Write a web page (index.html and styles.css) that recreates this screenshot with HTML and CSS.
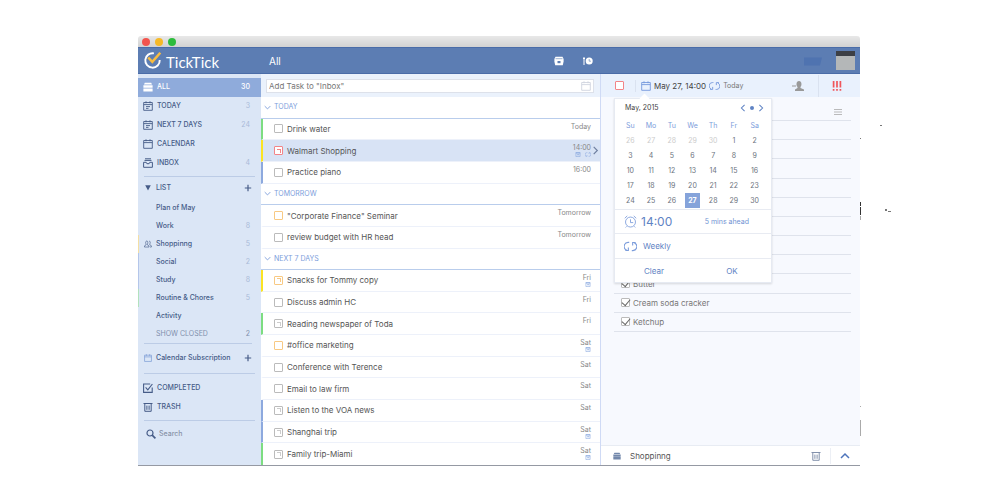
FILE: index.html
```
<!DOCTYPE html>
<html lang="en">
<head>
<meta charset="utf-8">
<title>TickTick</title>
<link rel="stylesheet" href="styles.css">
</head>
<body>
<svg class="sprite" aria-hidden="true">
  <symbol id="i-cal" viewBox="0 0 10 10"><path d="M.7 1.5h8.6v7.8H.7zM.7 3.6h8.6M3 .3v2M7 .3v2" fill="none" stroke="currentColor" stroke-width=".9"/></symbol>
  <symbol id="i-today" viewBox="0 0 10 10"><path d="M.7 1.5h8.6v7.8H.7zM.7 3.6h8.6M3 .3v2M7 .3v2M3 5.6h4M3 7.4h2.5" fill="none" stroke="currentColor" stroke-width=".9"/></symbol>
  <symbol id="i-stack" viewBox="0 0 10 10"><path d="M1.8.8h6.4l.8 1.8H1zM.4 3.2h9.2v2.6H.4zM.4 6.4h9.2v3H.4z" fill="currentColor"/></symbol>
  <symbol id="i-inbox" viewBox="0 0 10 10"><path d="M2 .8h6M1.5 2.4h7M.6 4.3h2.6l.7 1.4h2.2l.7-1.4h2.6v5H.6z" fill="none" stroke="currentColor"/></symbol>
  <symbol id="i-trash" viewBox="0 0 10 10"><path d="M.5 1.5h9M1.800 2v7.300h6.400V2M3.900 3.600v4.200M6.100 3.600v4.200" fill="none" stroke="currentColor"/></symbol>
  <symbol id="i-done" viewBox="0 0 10 10"><path d="M9.2 4.6v4.8H.6V1h6.6M2.6 4.4l2.2 2.4L9.4 1" fill="none" stroke="currentColor" stroke-width="1.1"/></symbol>
  <symbol id="i-people" viewBox="0 0 10 10"><path d="M3.5 1.2c1.6 0 1.7 2.7.7 3.9v1l2 1.2v1.5H.6V7.3l2-1.2v-1C1.7 3.9 1.8 1.2 3.5 1.2zM6.4 1.4c1.7-.3 1.7 2.5.8 3.6v1l2 1.2v1.6H7.4" fill="none" stroke="currentColor" stroke-width=".8"/></symbol>
  <symbol id="i-search" viewBox="0 0 10 10"><circle cx="4" cy="4" r="3" fill="none" stroke="currentColor" stroke-width="1.2"/><path d="M6.2 6.2l3.2 3.2" stroke="currentColor" stroke-width="1.7"/></symbol>
  <symbol id="i-plus" viewBox="0 0 10 10"><path d="M5 1v8M1 5h8" stroke="currentColor" stroke-width="1.5"/></symbol>
  <symbol id="i-down" viewBox="0 0 10 10"><path d="M1 3l4 4 4-4" fill="none" stroke="currentColor" stroke-width="1.3"/></symbol>
  <symbol id="i-up" viewBox="0 0 10 10"><path d="M1 7l4-4 4 4" fill="none" stroke="currentColor" stroke-width="1.5"/></symbol>
  <symbol id="i-left" viewBox="0 0 10 10"><path d="M7 1L3 5l4 4" fill="none" stroke="currentColor" stroke-width="1.3"/></symbol>
  <symbol id="i-right" viewBox="0 0 10 10"><path d="M3 1l4 4-4 4" fill="none" stroke="currentColor" stroke-width="1.3"/></symbol>
  <symbol id="i-tri" viewBox="0 0 10 10"><path d="M1.5 1.5h7L5 8z" fill="currentColor"/></symbol>
  <symbol id="i-repeat" viewBox="0 0 12 10"><path d="M4.8 1.2H4a3.7 3.7 0 0 0-1.6 7.1M7.2 8.8H8a3.7 3.7 0 0 0 1.6-7.1M4 6v2.700H1.200M8 4V1.300h2.800" fill="none" stroke="currentColor"/></symbol>
  <symbol id="i-mini" viewBox="0 0 6 6"><path d="M.5.5h5v5h-5z" fill="none" stroke="currentColor" stroke-width=".7"/><path d="M.5 1.2h5M2 3.3h2.5" stroke="currentColor"/></symbol>
</svg>

<div class="window">
  <div class="titlebar"><span class="dot red"></span><span class="dot amber"></span><span class="dot green"></span></div>

  <header class="header">
    <div class="brand">
      <svg class="mark" viewBox="0 0 20 20" aria-hidden="true"><path d="M11.5 2.500A7.600 7.600 0 1 0 17.600 9.500" fill="none" stroke="#fff" stroke-width="2"/><path d="M5.500 6.800l4.300 4.700L18.200 1.800" fill="none" stroke="#f9bc3f" stroke-width="2.600"/></svg>
      <span class="name">TickTick</span>
    </div>
    <div class="list-head">
      <h1>All</h1>
      <button class="plain" aria-label="Archive"><svg class="icon tool" viewBox="0 0 10 10"><path d="M1.500.7h7L9.600 3v2.600L8.800 9.300H1.200L.4 5.600V3z" fill="currentColor"/><path d="M1.500 2.700h7" stroke="#5c7db3" stroke-width=".6"/><path d="M3.500 5h3v2.200h-3z" fill="#5c7db3"/></svg></button>
      <button class="plain" aria-label="Sort by time"><svg class="icon tool" viewBox="0 0 10 10"><path d="M1 1v8M0 2.500h2" stroke="currentColor"/><circle cx="6.200" cy="5" r="3.500" fill="currentColor"/><path d="M6.200 3v2.200h1.800" fill="none" stroke="#5c7db3" stroke-width=".6"/></svg></button>
    </div>
    <div class="account">
      <svg class="user" viewBox="0 0 18 10" aria-hidden="true"><path d="M0 1.500h18l-2 8H0z" fill="#4f73b0"/></svg>
      <span class="avatar"></span>
    </div>
  </header>

  <nav class="sidebar">
    <ul class="main-nav">
      <li><a class="active" href="#"><svg class="icon"><use href="#i-stack"/></svg><span>ALL</span><b>30</b></a></li>
      <li><a href="#"><svg class="icon"><use href="#i-today"/></svg><span>TODAY</span><b>3</b></a></li>
      <li><a href="#"><svg class="icon"><use href="#i-today"/></svg><span>NEXT 7 DAYS</span><b>24</b></a></li>
      <li><a href="#"><svg class="icon"><use href="#i-cal"/></svg><span>CALENDAR</span></a></li>
      <li><a href="#"><svg class="icon"><use href="#i-inbox"/></svg><span>INBOX</span><b>4</b></a></li>
    </ul>
    <section class="lists">
      <div class="lists-head"><svg class="icon small"><use href="#i-tri"/></svg><h2>LIST</h2><button class="plain" aria-label="Add list"><svg class="icon small"><use href="#i-plus"/></svg></button></div>
      <ul>
        <li><a href="#"><i></i><span>Plan of May</span></a></li>
        <li><a href="#"><i></i><span>Work</span><b>8</b></a></li>
        <li><a class="s-yellow" href="#"><i><svg class="icon small"><use href="#i-people"/></svg></i><span>Shoppinng</span><b>5</b></a></li>
        <li><a class="s-blue" href="#"><i></i><span>Social</span><b>2</b></a></li>
        <li><a class="s-blue" href="#"><i></i><span>Study</span><b>8</b></a></li>
        <li><a class="s-green" href="#"><i></i><span>Routine &amp; Chores</span><b>5</b></a></li>
        <li><a href="#"><i></i><span>Activity</span></a></li>
        <li><a class="closed" href="#"><i></i><span>SHOW CLOSED</span><b>2</b></a></li>
      </ul>
    </section>
    <div class="subscription"><svg class="icon small"><use href="#i-cal"/></svg><span>Calendar Subscription</span><button class="plain" aria-label="Add subscription"><svg class="icon small"><use href="#i-plus"/></svg></button></div>
    <ul class="more">
      <li><a href="#"><svg class="icon"><use href="#i-done"/></svg><span>COMPLETED</span></a></li>
      <li><a href="#"><svg class="icon"><use href="#i-trash"/></svg><span>TRASH</span></a></li>
    </ul>
    <div class="search"><label><svg class="icon"><use href="#i-search"/></svg><input type="text" placeholder="Search" aria-label="Search"></label></div>
  </nav>

  <main class="tasks">
    <div class="add"><label><input type="text" placeholder='Add Task to "Inbox"' aria-label="Add task"><svg class="icon"><use href="#i-cal"/></svg></label></div>
    <div class="rows">
      <h2 class="group"><svg class="icon tiny"><use href="#i-down"/></svg>TODAY</h2>
      <div class="row c-green"><label><input type="checkbox">Drink water</label><div class="when">Today</div></div>
      <div class="row c-yellow selected"><label><input class="p-red note" type="checkbox">Walmart Shopping</label><div class="when">14:00<span><svg><use href="#i-mini"/></svg><svg><use href="#i-repeat"/></svg></span></div><svg class="icon open"><use href="#i-right"/></svg></div>
      <div class="row c-blue"><label><input type="checkbox">Practice piano</label><div class="when">16:00</div></div>
      <h2 class="group"><svg class="icon tiny"><use href="#i-down"/></svg>TOMORROW</h2>
      <div class="row"><label><input class="p-amber" type="checkbox">"Corporate Finance" Seminar</label><div class="when">Tomorrow</div></div>
      <div class="row"><label><input type="checkbox">review budget with HR head</label><div class="when">Tomorrow</div></div>
      <h2 class="group"><svg class="icon tiny"><use href="#i-down"/></svg>NEXT 7 DAYS</h2>
      <div class="row c-yellow"><label><input class="p-amber note" type="checkbox">Snacks for Tommy copy</label><div class="when">Fri<span><svg><use href="#i-mini"/></svg></span></div></div>
      <div class="row"><label><input type="checkbox">Discuss admin HC</label><div class="when">Fri</div></div>
      <div class="row c-green"><label><input class="note" type="checkbox">Reading newspaper of Toda</label><div class="when">Fri</div></div>
      <div class="row"><label><input class="p-amber" type="checkbox">#office marketing</label><div class="when">Sat<span><svg><use href="#i-mini"/></svg></span></div></div>
      <div class="row"><label><input type="checkbox">Conference with Terence</label><div class="when">Sat</div></div>
      <div class="row"><label><input type="checkbox">Email to law firm</label><div class="when">Sat</div></div>
      <div class="row c-blue"><label><input class="note" type="checkbox">Listen to the VOA news</label><div class="when">Sat</div></div>
      <div class="row c-blue"><label><input class="note" type="checkbox">Shanghai trip</label><div class="when">Sat<span><svg><use href="#i-mini"/></svg></span></div></div>
      <div class="row c-green"><label><input class="note" type="checkbox">Family trip-Miami</label><div class="when">Sat<span><svg><use href="#i-mini"/></svg></span></div></div>
    </div>
  </main>

  <aside class="detail">
    <div class="detail-head">
      <input class="p-red" type="checkbox" aria-label="Complete task">
      <button class="plain due"><svg class="icon"><use href="#i-cal"/></svg><span class="date">May 27, 14:00</span><svg class="repeat"><use href="#i-repeat"/></svg><span class="day">Today</span></button>
      <button class="plain assign" aria-label="Assign"><svg class="icon wide" viewBox="0 0 12 12"><path d="M7 1c3 0 3 4.500 1.500 6v1L12 9.500V11H3V9.500L5.500 8V7C4 5.500 4 1 7 1zM0 5.500h4v1H0z" fill="currentColor"/></svg></button>
      <button class="plain priority" aria-label="Priority"><svg class="icon" viewBox="0 0 10 10"><path d="M1.600 0v6.500M5 0v6.500M8.400 0v6.500M1.600 8v1.800M5 8v1.800M8.400 8v1.800" stroke="currentColor" stroke-width="1.700"/></svg></button>

      <div class="picker" role="dialog" aria-label="Due date">
        <div class="month"><span>May, 2015</span><button class="plain" aria-label="Previous month"><svg class="icon small"><use href="#i-left"/></svg></button><button class="plain" aria-label="Current month"><svg class="icon pip" viewBox="0 0 4 4"><circle cx="2" cy="2" r="2" fill="currentColor"/></svg></button><button class="plain" aria-label="Next month"><svg class="icon small"><use href="#i-right"/></svg></button></div>
        <table>
          <thead><tr><th>Su</th><th>Mo</th><th>Tu</th><th>We</th><th>Th</th><th>Fr</th><th>Sa</th></tr></thead>
          <tbody>
            <tr><td class="off">26</td><td class="off">27</td><td class="off">28</td><td class="off">29</td><td class="off">30</td><td>1</td><td>2</td></tr>
            <tr><td>3</td><td>4</td><td>5</td><td>6</td><td>7</td><td>8</td><td>9</td></tr>
            <tr><td>10</td><td>11</td><td>12</td><td>13</td><td>14</td><td>15</td><td>16</td></tr>
            <tr><td>17</td><td>18</td><td>19</td><td>20</td><td>21</td><td>22</td><td>23</td></tr>
            <tr><td>24</td><td>25</td><td>26</td><td><span class="chosen">27</span></td><td>28</td><td>29</td><td>30</td></tr>
          </tbody>
        </table>
        <div class="time"><svg class="clock" viewBox="0 0 12 12"><circle cx="6" cy="6.500" r="4.600" fill="none" stroke="currentColor" stroke-width=".8"/><path d="M6 4v3h2.500M.7 3L3 .8M11.300 3L9 .8M2.500 10.500l-1 1M9.500 10.500l1 1" fill="none" stroke="currentColor" stroke-width=".8"/></svg><span class="clock-text">14:00</span><button class="plain">5 mins ahead</button></div>
        <div class="weekly"><svg class="clock"><use href="#i-repeat"/></svg><span>Weekly</span></div>
        <div class="actions"><button class="plain">Clear</button><button class="plain">OK</button></div>
      </div>
    </div>
    <div class="checklist">
      <div class="title-row"><button class="plain" aria-label="Toggle checklist"><svg class="icon small" viewBox="0 0 8 8"><path d="M0 1.500h8M0 4h8M0 6.500h8" stroke="currentColor" stroke-width=".8"/></svg></button></div>
      <ul>
        <li></li><li></li><li></li><li></li><li></li><li></li><li></li><li></li>
        <li><label><input type="checkbox" checked>Butter</label></li>
        <li><label><input type="checkbox" checked>Cream soda cracker</label></li>
        <li><label><input type="checkbox" checked>Ketchup</label></li>
      </ul>
    </div>
    <footer><svg class="icon small"><use href="#i-stack"/></svg><span>Shoppinng</span><button class="plain bin" aria-label="Delete"><svg class="icon"><use href="#i-trash"/></svg></button><button class="plain more-up" aria-label="More"><svg class="icon"><use href="#i-up"/></svg></button></footer>
  </aside>

  <svg class="specks" viewBox="0 0 32 316" aria-hidden="true"><path d="M21 4h2v1h-2zM1 17h1v1H1zM26 88h2v2h-2zM29 90h3v1h-3z" fill="#777"/><path d="M1 81h1v4H1zM1 86h1v8H1z" fill="#333"/><path d="M1 95h1v4H1zM1 285h1v1H1zM1 299h1v16H1z" fill="#aaa"/></svg>
</div>
</body>
</html>
```
FILE: styles.css
```
* { box-sizing: border-box; }

body {
  display: flex;
  min-height: 100vh;
  margin: 0;
  padding: 36px 140px 34px 138px;
  background: #fff;
  color: #555;
  font: 8px/12px Inter, "Liberation Sans", sans-serif;
}

ul { margin: 0; padding: 0; list-style: none; }
a { color: inherit; text-decoration: none; }
h1, h2 { margin: 0; font-weight: 400; }
input { font: inherit; }

.sprite { position: absolute; width: 0; height: 0; }
.icon { display: block; flex: none; width: 10px; height: 10px; }
.icon.small { width: 8px; height: 8px; }
.icon.tiny { width: 7px; height: 7px; }
.icon.wide { width: 12px; height: 12px; }

.plain {
  padding: 0;
  border: 0;
  background: none;
  color: inherit;
  font: inherit;
}

.window {
  position: relative;
  display: grid;
  flex: 1;
  grid-template: 11px 27px 1fr / 123px minmax(0, 1fr) 259px;
  border-bottom: 1px solid #9599a3;
  border-radius: 3px 3px 0 0;
}

.titlebar {
  display: flex;
  grid-column: 1 / -1;
  align-items: center;
  gap: 5px;
  padding-left: 4px;
  border-radius: 3px 3px 0 0;
  background: linear-gradient(#e8e8e8, #d2d2d2);
}
.dot { width: 8px; height: 8px; border-radius: 50%; }
.red { background: #f2544d; }
.amber { background: #f6b927; }
.green { background: #2cbc3c; }

.header {
  display: grid;
  grid-column: 1 / -1;
  grid-template-columns: subgrid;
  align-items: center;
  border-top: 1px solid #4a6ca8;
  border-bottom: 1px solid #4a6ca8;
  background: #5c7db3;
  color: #fff;
}
.brand { display: flex; align-items: center; gap: 4px; padding-left: 5px; }
.mark { width: 19px; height: 19px; }
.name { padding-top: 2px; font: 15px/20px Lato, sans-serif; }
.list-head { display: flex; align-items: center; gap: 19px; padding: 0 8px; }
.list-head h1 { flex: 1; font-size: 10px; }
.account { display: flex; align-items: center; justify-content: flex-end; gap: 14px; padding-right: 5px; }
.user { width: 18px; height: 10px; }
.avatar { width: 19px; height: 19px; border-top: 5px solid #3c3f45; background: #b4b7b8; }

.sidebar {
  padding-top: 4px;
  background: #dbe6f6;
  color: #465c88;
  font-size: 7px;
  font-weight: 500;
}
.sidebar a { display: flex; align-items: center; }
.sidebar a span { flex: 1; }
.sidebar b { color: #a9bad8; font-weight: 400; }
.main-nav { display: grid; grid-auto-rows: 1fr; min-height: 94px; }
.main-nav li { display: grid; }
.main-nav a, .more a { gap: 4px; padding: 0 11px 0 5px; }
.main-nav .active { background: #8fabdb; color: #fff; }
.main-nav .active b { color: #fff; font-weight: 500; }
.lists { margin-top: 4px; }
.lists::before, .subscription::before, .more::before, .search::before {
  display: block;
  height: 1px;
  background: #bccce6;
  content: "";
}
.lists::before, .more::before { margin: 0 6px; }
.lists-head { display: flex; align-items: center; gap: 4px; height: 22px; padding: 0 9px 0 6px; }
.lists-head h2 { flex: 1; font-size: 7px; font-weight: 500; }
.lists li a { height: 18px; padding: 0 11px 0 5px; border-left: 1px solid transparent; }
.lists i { width: 12px; }
.lists .s-yellow { border-color: #f4dfa4; }
.lists .s-blue { border-color: #b4c6ea; }
.lists .s-green { border-color: #b2e2bd; }
.lists .closed, .lists .closed b { color: #7f8fac; font-weight: 400; }
.subscription {
  display: flex;
  flex-wrap: wrap;
  align-items: center;
  align-content: flex-start;
  gap: 8px 4px;
  height: 30px;
  padding: 0 9px 0 6px;
}
.subscription::before { flex: 0 0 100%; }
.subscription span { flex: 1; white-space: nowrap; }
.subscription > .icon { color: #7e9dd6; }
.more { padding-bottom: 4px; }
.more::before { margin-bottom: 4px; }
.more a { height: 19px; }
.search { padding: 0 6px; }
.search label { display: flex; align-items: center; gap: 3px; padding: 8px 2px; }
.search input { width: 80px; height: 10px; padding: 0; border: 0; background: none; }
.search input::placeholder { color: #8893a8; opacity: 1; }

.tasks { display: flex; flex-direction: column; border-right: 1px solid #cfdaf5; }
.add { padding: 5px 6px 4px 5px; background: #ebf2fc; }
.add label { display: flex; align-items: center; height: 14px; padding: 0 2px; border: 1px solid #dde1ea; background: #fff; }
.add input { flex: 1; min-width: 0; height: 12px; padding: 0; border: 0; background: none; }
.add input::placeholder { color: #777; opacity: 1; }
.add .icon { color: #d0d5e0; }
.rows { display: grid; flex: 1; grid-auto-rows: minmax(20px, 1fr); }
.group {
  display: flex;
  align-items: center;
  gap: 3px;
  padding-left: 3px;
  border-bottom: 1px solid #b9cdec;
  color: #7c9ddb;
  font-size: 7px;
}
.row {
  position: relative;
  display: flex;
  align-items: center;
  padding: 0 9px 0 11px;
  border-bottom: 1px solid #edf1fa;
  border-left: 2px solid transparent;
}
.row:last-child { border-bottom: 0; }
.c-green { border-left-color: #7ddd81; }
.c-yellow { border-left-color: #fbe424; }
.c-blue { border-left-color: #8da9de; }
.selected { background: #d8e3f5; }
.row label { display: flex; flex: 1; align-items: center; gap: 4px; }
.when { align-self: stretch; padding-top: 2px; color: #888; font-size: 7px; text-align: right; }
.when span { display: flex; justify-content: flex-end; gap: 4px; margin-top: -2px; color: #86a5df; }
.when svg { width: 6px; height: 5px; }
.row .open { position: absolute; right: 0; width: 9px; height: 9px; color: #6e7f9f; }

input[type="checkbox"] {
  display: grid;
  flex: none;
  place-content: center;
  width: 9px;
  height: 9px;
  margin: 0;
  border: 1px solid #bbb;
  border-radius: 1px;
  background: #fff;
  color: #ccc;
  appearance: none;
}
input[type="checkbox"].p-red { border-color: #f28488; color: #f28488; }
input[type="checkbox"].p-amber { border-color: #f8c983; color: #f8c983; }
input.note::before { width: 3px; height: 3px; border: solid currentColor; border-width: 1px 1px 0 0; content: ""; }

.detail { display: flex; flex-direction: column; background: #f7f9fe; }
.detail-head {
  position: relative;
  display: flex;
  align-items: center;
  height: 23px;
  padding: 0 18px 0 14px;
  background: #e9f1fd;
}
.due { display: flex; align-items: center; gap: 3px; margin-left: 11px; padding-left: 5px; border-left: 1px solid #dae2f0; }
.due .icon, .repeat { color: #7598dc; }
.date { color: #444; font-size: 8px; }
.repeat { width: 11px; height: 10px; }
.day { color: #777; font-size: 7px; }
.assign { margin-left: auto; padding-right: 14px; color: #999; }
.priority { padding: 6px 0 6px 13px; border-left: 1px solid #dae2f0; color: #f0565b; }

.picker {
  position: absolute;
  z-index: 1;
  top: 24px;
  left: 13px;
  width: 158px;
  border: 1px solid #e6eaf2;
  background: #fff;
  box-shadow: 0 1px 2px #0002;
  color: #5f83c4;
}
.picker::before {
  position: absolute;
  top: -4px;
  left: 26px;
  width: 7px;
  height: 7px;
  background: #fff;
  content: "";
  transform: rotate(45deg);
}
.month { display: flex; align-items: center; gap: 3px; height: 18px; padding: 0 6px 0 10px; font-size: 7px; }
.month span { flex: 1; color: #444; }
.pip { width: 4px; height: 4px; }
.picker table { width: 145px; margin: 0 5px 1px; border-collapse: collapse; font-size: 7px; table-layout: fixed; }
.picker th, .picker td { height: 15px; padding: 0; line-height: 15px; text-align: center; }
.picker th { height: 16px; color: #7c9ddb; font-weight: 400; }
.picker td { color: #6b727d; }
.picker td.off { color: #ccc; }
.chosen { display: block; width: 15px; margin: 0 auto; background: #85a3da; color: #fff; font-weight: 700; }
.time, .weekly, .actions { display: flex; align-items: center; height: 24px; border-top: 1px solid #e8ebf2; }
.clock { width: 13px; height: 13px; color: #7c9ddb; }
.time, .weekly { padding: 0 22px 0 9px; gap: 4px; }
.clock-text { flex: 1; font-size: 12px; }
.time button { color: #7093d3; font-size: 7px; }
.weekly { height: 25px; gap: 6px; }
.actions button { flex: 1; }

.checklist { flex: 1; padding: 0 9px 0 13px; color: #777; }
.title-row { display: flex; align-items: center; justify-content: flex-end; height: 24px; padding: 6px 9px 0 0; border-bottom: 1px solid #dfe3ec; color: #aaa; }
.checklist ul { display: grid; grid-auto-rows: 1fr; min-height: 211px; }
.checklist li { display: grid; align-items: center; border-bottom: 1px solid #dfe3ec; }
.checklist label { display: flex; align-items: center; gap: 3px; padding-left: 7px; }
.checklist input:checked::before {
  width: 7px;
  height: 4px;
  margin-bottom: 3px;
  border: solid #666;
  border-width: 0 0 1px 1px;
  content: "";
  transform: rotate(-50deg);
}

.detail footer { display: flex; align-items: center; gap: 9px; height: 20px; padding: 0 10px 0 12px; border-top: 1px solid #e8ecf3; background: #fff; }
.detail footer > .icon { color: #7287ab; }
.detail footer span { flex: 1; }
.bin { color: #8291ac; }
.more-up { padding: 3px 0 3px 9px; border-left: 1px solid #eceff5; color: #4d74bb; }

.specks { position: absolute; top: 85px; left: calc(100% - 1px); width: 32px; height: 316px; }
```
